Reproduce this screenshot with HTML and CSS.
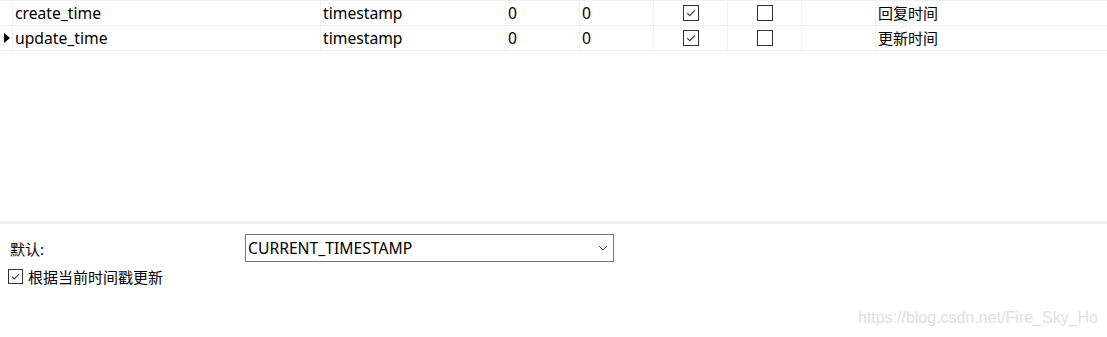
FILE: index.html
```html
<!DOCTYPE html>
<html lang="zh">
<head>
<meta charset="utf-8">
<title>Fields</title>
<link rel="stylesheet" href="styles.css">
</head>
<body>
<div class="page">
  <div class="grid">
    <div class="row">
      <div class="cell gutter"></div>
      <div class="cell c-name latin">create_time</div>
      <div class="cell c-type latin">timestamp</div>
      <div class="cell c-num latin">0</div>
      <div class="cell c-num latin">0</div>
      <div class="cell c-chk"><span class="box checked"><svg viewBox="0 0 15 15"><path d="M3.5 7.8 L6.2 10.3 L11.5 4.8" /></svg></span></div>
      <div class="cell c-chk"><span class="box"></span></div>
      <div class="cell c-num"></div>
      <div class="cell c-comment">回复时间</div>
    </div>
    <div class="row">
      <div class="cell gutter"><span class="marker"></span></div>
      <div class="cell c-name latin">update_time</div>
      <div class="cell c-type latin">timestamp</div>
      <div class="cell c-num latin">0</div>
      <div class="cell c-num latin">0</div>
      <div class="cell c-chk"><span class="box checked"><svg viewBox="0 0 15 15"><path d="M3.5 7.8 L6.2 10.3 L11.5 4.8" /></svg></span></div>
      <div class="cell c-chk"><span class="box"></span></div>
      <div class="cell c-num"></div>
      <div class="cell c-comment">更新时间</div>
    </div>
  </div>
  <div class="spacer"></div>
  <div class="separator"></div>
  <div class="props">
    <div class="prop-row">
      <span class="prop-label">默认:</span>
      <div class="select">
        <span class="select-value latin">CURRENT_TIMESTAMP</span>
        <svg class="chevron" viewBox="0 0 10 6"><path d="M1 1 L5 5 L9 1" /></svg>
      </div>
    </div>
    <label class="check-row">
      <span class="box small checked"><svg viewBox="0 0 15 15"><path d="M3.5 7.8 L6.2 10.3 L11.5 4.8" /></svg></span>
      <span class="check-label">根据当前时间戳更新</span>
    </label>
  </div>
  <div class="watermark">https://blog.csdn.net/Fire_Sky_Ho</div>
</div>
</body>
</html>
```

FILE: styles.css
```css
html, body {
  margin: 0;
  padding: 0;
  background: #ffffff;
}

.page {
  position: relative;
  width: 1107px;
  height: 337px;
  overflow: hidden;
  font-family: "Segoe UI", "Noto Sans", "Noto Sans CJK SC", sans-serif;
  font-size: 15px;
  color: #000000;
}

.latin {
  font-size: 15.7px;
}

.grid {
  border-top: 1px solid #f0f0f0;
}

.row {
  display: flex;
  height: 24px;
  border-bottom: 1px solid #f0f0f0;
}

.cell {
  box-sizing: border-box;
  height: 24px;
  border-right: 1px solid #f0f0f0;
  padding-left: 2px;
  display: flex;
  align-items: center;
  white-space: nowrap;
  line-height: 24px;
}

.gutter {
  width: 13px;
  padding-left: 0;
}

.marker {
  display: block;
  width: 0;
  height: 0;
  margin-left: 4px;
  border-top: 5.5px solid transparent;
  border-bottom: 5.5px solid transparent;
  border-left: 6px solid #000000;
}

.c-name { width: 308px; }
.c-type { width: 185px; }
.c-num { width: 74px; }
.c-chk { width: 74px; justify-content: center; padding-left: 0; }
.c-comment { flex: 1; border-right: none; }

.box {
  box-sizing: border-box;
  display: inline-block;
  flex: none;
  width: 16px;
  height: 16px;
  border: 1.5px solid #333333;
  background: #ffffff;
}

.box svg {
  display: block;
  width: 100%;
  height: 100%;
}

.box svg path {
  fill: none;
  stroke: #444444;
  stroke-width: 1.3;
}

.spacer {
  height: 170px;
}

.separator {
  height: 3px;
  background: #f0f0f0;
}

.props {
  padding: 10px 0 0 8px;
  display: flex;
  flex-direction: column;
  gap: 6px;
}

.prop-row {
  display: flex;
  align-items: center;
}

.prop-label {
  box-sizing: border-box;
  width: 237px;
  padding-left: 2px;
}

.select {
  box-sizing: border-box;
  width: 369px;
  height: 28px;
  border: 1px solid #7a7a7a;
  display: flex;
  align-items: center;
  justify-content: space-between;
  padding: 0 5px 0 2px;
}

.chevron {
  width: 10px;
  height: 6px;
}

.chevron path {
  fill: none;
  stroke: #555555;
  stroke-width: 1;
}

.check-row {
  display: flex;
  align-items: center;
  gap: 5px;
  height: 16px;
}

.box.small {
  width: 15px;
  height: 15px;
}

.watermark {
  position: absolute;
  right: 9px;
  top: 309px;
  font-family: "Liberation Sans", Arial, sans-serif;
  font-size: 16px;
  color: #e0e0e0;
}
```
